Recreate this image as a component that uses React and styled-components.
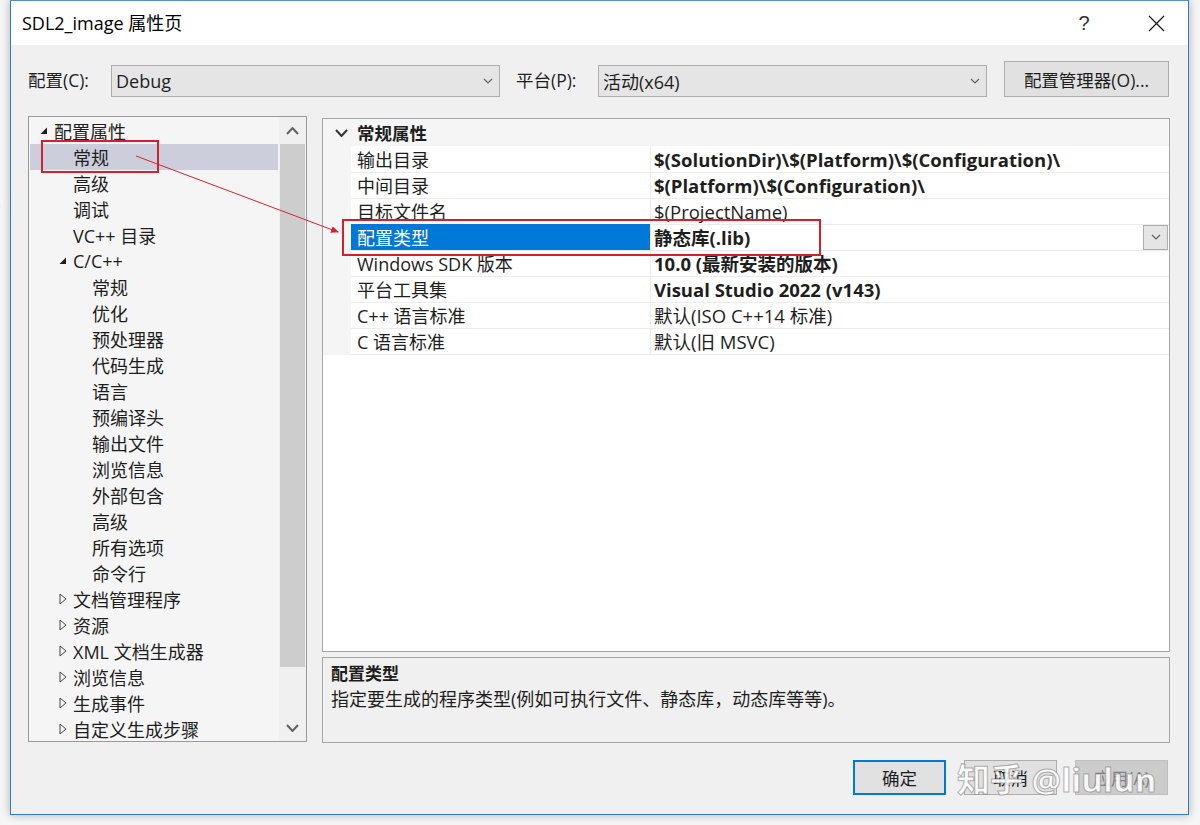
import React from 'react';
import styled, { createGlobalStyle } from 'styled-components';

const FONT = `"Open Sans", "Noto Sans CJK SC", sans-serif`;

const GlobalStyle = createGlobalStyle`
  html, body { margin: 0; padding: 0; }
  body { background: #f6f6f6; font-family: ${FONT}; color: #1e1e1e; }
  * { box-sizing: border-box; }
`;

const Page = styled.div`
  position: relative;
  width: 1200px;
  height: 825px;
  display: flex;
  overflow: hidden;
  background: #f6f6f6;
`;

const Gutter = styled.div`
  width: 10px;
  flex: none;
  padding-top: 186px;
  font-size: 26px;
  line-height: 36px;
  color: #222;
  overflow: hidden;
  span { display: block; margin-left: -7px; }
`;

const Window = styled.div`
  width: 1179px;
  height: 815px;
  flex: none;
  display: flex;
  flex-direction: column;
  border: 1px solid #2f7cc4;
  border-top-color: #5a8fc0;
  box-shadow: 0 0 9px rgba(0, 0, 0, 0.28);
  background: #f0f0f0;
`;

const TitleBar = styled.div`
  height: 44px;
  flex: none;
  background: #ffffff;
  display: flex;
  align-items: center;
  padding: 0 9px 0 11px;
`;

const Title = styled.div`
  font-size: 18px;
  color: #000;
  flex: 1;
  padding-bottom: 2px;
`;

const TitleIcon = styled.div`
  width: ${(p) => p.$w}px;
  margin-left: ${(p) => p.$gap || 0}px;
  height: 44px;
  flex: none;
  display: flex;
  align-items: center;
  justify-content: center;
  font-size: 20px;
  color: #333;
  font-family: "Liberation Sans", sans-serif;
  font-weight: 300;
`;

const Body = styled.div`
  flex: 1;
  display: flex;
  flex-direction: column;
  padding: 16px 18px 0 17px;
`;

const TopRow = styled.div`
  height: 36px;
  display: flex;
  align-items: center;
`;

const Label = styled.div`
  width: ${(p) => p.$w}px;
  padding-left: ${(p) => p.$pad || 0}px;
  font-size: 17.5px;
  flex: none;
  padding-top: 1px;
`;

const Combo = styled.div`
  width: 389px;
  height: 32px;
  margin-top: 4px;
  flex: none;
  background: #e5e5e5;
  border: 1px solid #adadad;
  display: flex;
  align-items: center;
  padding: 0 6px 0 4px;
  font-size: 18px;
  span { flex: 1; padding-bottom: 1px; }
`;

const Button = styled.div`
  width: ${(p) => p.$w || 93}px;
  height: ${(p) => p.$h || 35}px;
  flex: none;
  display: flex;
  align-items: center;
  justify-content: center;
  font-size: 17.5px;
  background: ${(p) => (p.$disabled ? '#cccccc' : '#e1e1e1')};
  color: ${(p) => (p.$disabled ? '#838383' : '#1e1e1e')};
  border: ${(p) => (p.$default ? '2px solid #0078d7' : p.$disabled ? '1px solid #bfbfbf' : '1px solid #adadad')};
  margin-left: ${(p) => (p.$push ? 'auto' : '0')};
  margin-right: ${(p) => (p.$push ? '1px' : '0')};
`;

const Main = styled.div`
  margin-top: 19px;
  height: 627px;
  display: flex;
  gap: 15px;
`;

const Tree = styled.div`
  width: 279px;
  height: 626px;
  flex: none;
  border: 1px solid #9a9a9a;
  background: #f5f5f5;
  display: flex;
`;

const TreeList = styled.div`
  flex: 1;
  overflow: hidden;
  padding: 1px 1px 0 1px;
`;

const TreeRow = styled.div`
  height: 26px;
  display: flex;
  align-items: center;
  padding-left: ${(p) => 8 + p.$level * 19}px;
  background: ${(p) => (p.$selected ? '#cccedb' : 'transparent')};
  font-size: 18px;
  white-space: nowrap;
  color: #1e1e1e;
`;

const Toggle = styled.span`
  width: 16px;
  flex: none;
  display: flex;
  align-items: center;
  justify-content: flex-start;
  padding-left: 2px;
`;

const ScrollBar = styled.div`
  width: 27px;
  flex: none;
  background: #f0f0f0;
  display: flex;
  flex-direction: column;
  padding: 0 1px 0 1px;
`;

const ScrollArrow = styled.div`
  height: 27px;
  flex: none;
  display: flex;
  align-items: center;
  justify-content: center;
`;

const Thumb = styled.div`
  height: 523px;
  flex: none;
  background: #cdcdcd;
`;

const Spacer = styled.div`
  flex: 1;
`;

const RightCol = styled.div`
  width: 848px;
  flex: none;
  display: flex;
  flex-direction: column;
  gap: 5px;
  padding-top: 2px;
`;

const Grid = styled.div`
  height: 534px;
  flex: none;
  border: 1px solid #a6a6a6;
  background: #ffffff;
`;

const CatRow = styled.div`
  height: 27px;
  display: flex;
  align-items: center;
  background: #f5f5f5;
  font-size: 17.5px;
  font-weight: 700;
`;

const CatIcon = styled.div`
  width: 34px;
  flex: none;
  display: flex;
  justify-content: center;
  padding-left: 2px;
`;

const PropRow = styled.div`
  height: 26px;
  display: grid;
  grid-template-columns: 28px 300px 1fr;
  font-size: 18px;
`;

const PropGutter = styled.div`
  background: #f5f5f5;
`;

const NameCell = styled.div`
  display: flex;
  align-items: center;
  padding-left: 6px;
  border-bottom: 1px solid #ececec;
  border-right: 1px solid #ececec;
  background: ${(p) => (p.$selected ? '#0078d7' : 'transparent')};
  color: ${(p) => (p.$selected ? '#ffffff' : '#1e1e1e')};
  white-space: nowrap;
`;

const ValueCell = styled.div`
  display: flex;
  align-items: center;
  padding-left: 3px;
  border-bottom: 1px solid #ececec;
  font-weight: ${(p) => (p.$bold ? 700 : 400)};
  font-size: 18.5px;
  white-space: nowrap;
  span { flex: 1; }
`;

const DropBtn = styled.div`
  width: 25px;
  height: 25px;
  flex: none;
  background: #e5e5e5;
  border: 1px solid #adadad;
  display: flex;
  align-items: center;
  justify-content: center;
  margin-right: 1px;
`;

const Desc = styled.div`
  height: 86px;
  flex: none;
  border: 1px solid #a6a6a6;
  background: #f0f0f0;
  padding: 4px 8px;
`;

const DescTitle = styled.div`
  font-size: 17px;
  font-weight: 700;
  line-height: 24px;
`;

const DescText = styled.div`
  font-size: 18px;
  line-height: 26px;
`;

const ButtonRow = styled.div`
  margin-top: 17px;
  height: 35px;
  display: flex;
  justify-content: flex-end;
  gap: 18px;
  padding-right: 2px;
`;

const Watermark = styled.div`
  position: absolute;
  left: 957px;
  top: 754px;
  font-size: 33px;
  font-weight: 700;
  color: rgba(255, 255, 255, 0.88);
  -webkit-text-stroke: 1px rgba(110, 110, 110, 0.55);
  pointer-events: none;
  white-space: nowrap;
`;

const Annot = styled.svg`
  position: absolute;
  left: 0;
  top: 0;
  pointer-events: none;
`;

const Chevron = ({ w = 10, h = 6, up = false, color = '#606060', sw = 1.2 }) => (
  <svg width={w} height={h} viewBox={`0 0 ${w} ${h}`}>
    <path
      d={up ? `M1 ${h - 1} L${w / 2} 1 L${w - 1} ${h - 1}` : `M1 1 L${w / 2} ${h - 1} L${w - 1} 1`}
      fill="none"
      stroke={color}
      strokeWidth={sw}
    />
  </svg>
);

const Expanded = () => (
  <svg width="8" height="8" viewBox="0 0 8 8">
    <path d="M7 0.5 L7 7 L0.5 7 Z" fill="#1e1e1e" />
  </svg>
);

const Collapsed = () => (
  <svg width="8" height="12" viewBox="0 0 8 12">
    <path d="M1 1 L7 6 L1 11 Z" fill="none" stroke="#444" strokeWidth="1" />
  </svg>
);

const treeItems = [
  { t: '配置属性', l: 0, toggle: 'open' },
  { t: '常规', l: 1, sel: true },
  { t: '高级', l: 1 },
  { t: '调试', l: 1 },
  { t: 'VC++ 目录', l: 1 },
  { t: 'C/C++', l: 1, toggle: 'open' },
  { t: '常规', l: 2 },
  { t: '优化', l: 2 },
  { t: '预处理器', l: 2 },
  { t: '代码生成', l: 2 },
  { t: '语言', l: 2 },
  { t: '预编译头', l: 2 },
  { t: '输出文件', l: 2 },
  { t: '浏览信息', l: 2 },
  { t: '外部包含', l: 2 },
  { t: '高级', l: 2 },
  { t: '所有选项', l: 2 },
  { t: '命令行', l: 2 },
  { t: '文档管理程序', l: 1, toggle: 'closed' },
  { t: '资源', l: 1, toggle: 'closed' },
  { t: 'XML 文档生成器', l: 1, toggle: 'closed' },
  { t: '浏览信息', l: 1, toggle: 'closed' },
  { t: '生成事件', l: 1, toggle: 'closed' },
  { t: '自定义生成步骤', l: 1, toggle: 'closed' },
];

const props = [
  { n: '输出目录', v: '$(SolutionDir)\\$(Platform)\\$(Configuration)\\', b: true },
  { n: '中间目录', v: '$(Platform)\\$(Configuration)\\', b: true },
  { n: '目标文件名', v: '$(ProjectName)' },
  { n: '配置类型', v: '静态库(.lib)', b: true, sel: true },
  { n: 'Windows SDK 版本', v: '10.0 (最新安装的版本)', b: true },
  { n: '平台工具集', v: 'Visual Studio 2022 (v143)', b: true },
  { n: 'C++ 语言标准', v: '默认(ISO C++14 标准)' },
  { n: 'C 语言标准', v: '默认(旧 MSVC)' },
];

export default function App() {
  return (
    <>
      <GlobalStyle />
      <Page>
        <Gutter>
          <span>)</span>
        </Gutter>
        <Window>
          <TitleBar>
            <Title>SDL2_image 属性页</Title>
            <TitleIcon $w={24}>?</TitleIcon>
            <TitleIcon $w={46} $gap={37}>
              <svg width="17" height="17" viewBox="0 0 17 17">
                <path d="M1 1 L16 16 M16 1 L1 16" stroke="#111" strokeWidth="1.1" />
              </svg>
            </TitleIcon>
          </TitleBar>
          <Body>
            <TopRow>
              <Label $w={83}>配置(C):</Label>
              <Combo>
                <span>Debug</span>
                <Chevron />
              </Combo>
              <Label $w={98} $pad={16}>平台(P):</Label>
              <Combo>
                <span>活动(x64)</span>
                <Chevron />
              </Combo>
              <Button $w={165} $h={36} $push>配置管理器(O)...</Button>
            </TopRow>
            <Main>
              <Tree>
                <TreeList>
                  {treeItems.map((it, i) => (
                    <TreeRow key={i} $level={it.l} $selected={it.sel}>
                      <Toggle>
                        {it.toggle === 'open' && <Expanded />}
                        {it.toggle === 'closed' && <Collapsed />}
                      </Toggle>
                      {it.t}
                    </TreeRow>
                  ))}
                </TreeList>
                <ScrollBar>
                  <ScrollArrow>
                    <Chevron w={13} h={8} up sw={2} color="#606060" />
                  </ScrollArrow>
                  <Thumb />
                  <Spacer />
                  <ScrollArrow>
                    <Chevron w={13} h={8} sw={2} color="#606060" />
                  </ScrollArrow>
                </ScrollBar>
              </Tree>
              <RightCol>
                <Grid>
                  <CatRow>
                    <CatIcon>
                      <Chevron w={13} h={8} sw={2} color="#333" />
                    </CatIcon>
                    常规属性
                  </CatRow>
                  {props.map((p, i) => (
                    <PropRow key={i}>
                      <PropGutter />
                      <NameCell $selected={p.sel}>{p.n}</NameCell>
                      <ValueCell $bold={p.b}>
                        <span>{p.v}</span>
                        {p.sel && (
                          <DropBtn>
                            <Chevron />
                          </DropBtn>
                        )}
                      </ValueCell>
                    </PropRow>
                  ))}
                </Grid>
                <Desc>
                  <DescTitle>配置类型</DescTitle>
                  <DescText>指定要生成的程序类型(例如可执行文件、静态库，动态库等等)。</DescText>
                </Desc>
              </RightCol>
            </Main>
            <ButtonRow>
              <Button $default>确定</Button>
              <Button>取消</Button>
              <Button $disabled>应用(A)</Button>
            </ButtonRow>
          </Body>
        </Window>
        <Watermark>知乎 @liulun</Watermark>
        <Annot width="1200" height="825" viewBox="0 0 1200 825">
          <defs>
            <marker id="ah" markerWidth="8" markerHeight="8" refX="7" refY="4" orient="auto">
              <path d="M0 0.5 L8 4 L0 7.5 Z" fill="#d9242c" />
            </marker>
          </defs>
          <rect x="42" y="141" width="116" height="31" fill="none" stroke="#d4202c" strokeWidth="2" />
          <rect x="343" y="220" width="477" height="35" fill="none" stroke="#d4202c" strokeWidth="2" />
          <line x1="136" y1="156" x2="338" y2="232" stroke="#d9242c" strokeWidth="1" markerEnd="url(#ah)" />
        </Annot>
      </Page>
    </>
  );
}
